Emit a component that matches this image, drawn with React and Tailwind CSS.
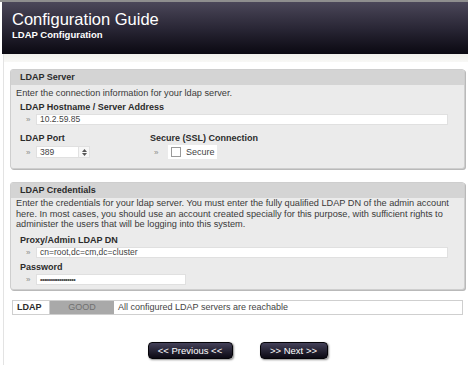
import React from "react";

const label = "text-[9px] font-bold leading-[11px] text-[#2b2b2b]";
const raquo = "w-[10px] shrink-0 text-[8px] leading-[11px] text-[#8a8a8a]";

function Panel({ title, className, children }) {
  return (
    <div className={"ml-[6px] w-[455px] overflow-hidden rounded-[3px] border border-[#cecece] bg-[#ebebeb] shadow-[1px_1px_0_#b9b9b9] " + className}>
      <div className="h-[15px] bg-[#d4d4d4] pl-[9px] text-[9px] font-bold leading-[15px] text-[#2b2b2b]">
        {title}
      </div>
      {children}
    </div>
  );
}

function Spinner() {
  return (
    <div className="flex h-full w-[11px] flex-col items-center justify-center gap-[1px] border-l border-[#e2e2e2] bg-[#f6f6f6]">
      <svg width="5" height="3" viewBox="0 0 5 3"><path d="M0 3 L2.5 0 L5 3Z" fill="#555" /></svg>
      <svg width="5" height="3" viewBox="0 0 5 3"><path d="M0 0 L2.5 3 L5 0Z" fill="#555" /></svg>
    </div>
  );
}

export default function App() {
  return (
    <div className="h-[372px] w-[474px] overflow-hidden bg-white font-['Liberation_Sans',Arial,sans-serif] text-[#333]">
      <div className="h-[2px] w-[468px] bg-[#8e8e8e]" />
      <div className="ml-[2px] h-[52px] w-[466px] bg-linear-to-b from-[#4b4759] via-[#2a2736] to-[#0b0912] pl-[10px] pt-[8px]">
        <div className="text-[16.5px] leading-[19px] text-white">Configuration Guide</div>
        <div className="text-[9.5px] font-bold leading-[11px] text-white">LDAP Configuration</div>
      </div>

      <div className="ml-[3px] h-[311px] w-[465px] border-l border-[#e3e3e3]">
        <div className="h-[8px] bg-linear-to-b from-[#efefeb] to-[#f8f8f6]" />

        {/* LDAP server */}
        <Panel title="LDAP Server" className="mt-[7px]">
          <div className="pb-[9px] pl-[5px] pr-[16px] pt-[3px]">
            <div className="text-[9.2px] leading-[11px] text-[#3a3a3a]">
              Enter the connection information for your ldap server.
            </div>
            <div className={label + " ml-[4px] mt-[3px]"}>LDAP Hostname / Server Address</div>
            <div className="ml-[10px] mt-[1px] flex items-center">
              <span className={raquo}>»</span>
              <div className="h-[11px] flex-1 border border-[#e0e0e0] bg-white pl-[3px] text-[8.5px] leading-[9px] text-[#444]">
                10.2.59.85
              </div>
            </div>
            <div className="ml-[4px] mt-[8px] grid grid-cols-[130px_1fr]">
              <div>
                <div className={label}>LDAP Port</div>
                <div className="ml-[6px] mt-[1px] flex h-[14px] items-center">
                  <span className={raquo}>»</span>
                  <div className="flex h-[12px] w-[54px] items-center border border-[#e0e0e0] bg-white">
                    <span className="flex-1 pl-[3px] text-[8.5px] leading-[9px] text-[#444]">389</span>
                    <Spinner />
                  </div>
                </div>
              </div>
              <div>
                <div className={label}>Secure (SSL) Connection</div>
                <div className="ml-[4px] mt-[1px] flex h-[14px] items-center">
                  <span className="w-[14px] shrink-0 text-[8px] leading-[11px] text-[#8a8a8a]">»</span>
                  <div className="flex h-[14px] w-[49px] items-center gap-[5px] bg-white pl-[3px]">
                    <span className="h-[10px] w-[10px] border border-[#9a9a9a] bg-white" />
                    <span className="text-[9px] leading-[11px] text-[#444]">Secure</span>
                  </div>
                </div>
              </div>
            </div>
          </div>
        </Panel>

        {/* LDAP credentials */}
        <Panel title="LDAP Credentials" className="mt-[13px]">
          <div className="pb-[4px] pl-[5px] pr-[16px]">
            <div className="whitespace-nowrap text-[9.2px] leading-[10.5px] text-[#3a3a3a]">
              Enter the credentials for your ldap server. You must enter the fully qualified LDAP DN of the admin account
              <br />
              here. In most cases, you should use an account created specially for this purpose, with sufficient rights to
              <br />
              administer the users that will be logging into this system.
            </div>
            <div className={label + " ml-[4px] mt-[5px]"}>Proxy/Admin LDAP DN</div>
            <div className="ml-[10px] mt-[1px] flex items-center">
              <span className={raquo}>»</span>
              <div className="h-[11px] flex-1 border border-[#e0e0e0] bg-white pl-[3px] text-[8.5px] leading-[9px] text-[#444]">
                cn=root,dc=cm,dc=cluster
              </div>
            </div>
            <div className={label + " ml-[4px] mt-[4px]"}>Password</div>
            <div className="ml-[10px] mt-[1px] flex items-center">
              <span className={raquo}>»</span>
              <div className="h-[11px] w-[150px] overflow-hidden border border-[#e0e0e0] bg-white pl-[3px] text-[7px] leading-[9px] tracking-[-0.5px] text-[#444]">
                ••••••••••••••••••
              </div>
            </div>
          </div>
        </Panel>

        {/* status */}
        <div className="ml-[8px] mt-[10px] flex h-[15px] w-[451px] border border-[#cfcfcf] bg-white text-[9px] leading-[13px]">
          <div className="w-[37px] border-r border-[#cfcfcf] pl-[4px] font-bold text-[#2b2b2b]">LDAP</div>
          <div className="w-[64px] bg-[#a9a9a9] text-center text-[#707070]">GOOD</div>
          <div className="pl-[4px] text-[#444]">All configured LDAP servers are reachable</div>
        </div>

        <div className="mt-[27px] flex justify-center gap-[27px] pl-[3px]">
          <button className="h-[17px] w-[85px] rounded-[4px] border border-[#050408] bg-linear-to-b from-[#45425a] to-[#0c0a14] text-[9.5px] leading-[15px] text-white shadow-[1px_1px_2px_#8a8a8a]">
            {"<< Previous <<"}
          </button>
          <button className="h-[17px] w-[68px] rounded-[4px] border border-[#050408] bg-linear-to-b from-[#45425a] to-[#0c0a14] text-[9.5px] leading-[15px] text-white shadow-[1px_1px_2px_#8a8a8a]">
            {">> Next >>"}
          </button>
        </div>
      </div>
    </div>
  );
}
